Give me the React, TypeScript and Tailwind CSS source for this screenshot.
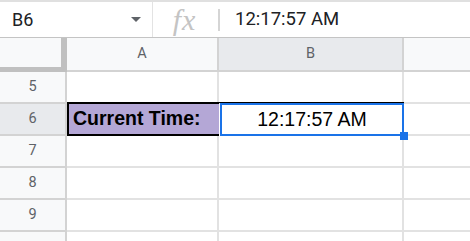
import React from "react";

const rowNums = [5, 6, 7, 8, 9, 10];

export default function App() {
  return (
    <div className="w-[470px] h-[241px] overflow-hidden bg-white" style={{ fontFamily: "Roboto, 'Liberation Sans', sans-serif" }}>
      {/* top strip */}
      <div className="h-[2px] bg-[#e0e0e0]" />
      {/* formula bar */}
      <div className="h-[36px] flex items-stretch border-b border-[#c4c4c4]">
        <div className="w-[153px] flex items-center justify-between pl-[12px] pr-[11px] border-r border-[#e3e3e3]">
          <span className="text-[18px] text-[#202124] leading-none">B6</span>
          <svg width="10" height="5" viewBox="0 0 10 5"><path d="M0 0 L10 0 L5 5 Z" fill="#5f6368" /></svg>
        </div>
        <div className="w-[65px] flex items-center justify-center">
          <span className="text-[30px] text-[#c4c4c4] italic leading-none pr-[2px] tracking-[1px]" style={{ fontFamily: "'Liberation Serif', serif" }}>fx</span>
        </div>
        <div className="flex items-center">
          <div className="w-[2px] h-[22px] bg-[#d5d5d5]" />
        </div>
        <div className="flex items-center pl-[15px]">
          <span className="text-[18.5px] text-[#202124] leading-none">12:17:57 AM</span>
        </div>
      </div>
      {/* column header */}
      <div className="h-[34px] flex">
        <div className="w-[67px] bg-[#f8f9fa] border-r-[6px] border-b-[5px] border-[#c0c0c0]" />
        <div className="w-[152px] bg-[#f8f9fa] border-r-2 border-b-2 border-[#d3d3d3] flex items-center justify-center text-[14.5px] text-[#5f6368]">A</div>
        <div className="w-[185px] bg-[#e8eaed] border-r-2 border-b-2 border-[#d3d3d3] flex items-center justify-center text-[14.5px] text-[#5f6368]">B</div>
        <div className="flex-1 bg-[#f8f9fa] border-b-2 border-[#d3d3d3]" />
      </div>
      {/* rows */}
      {rowNums.map((n) => (
        <div key={n} className="h-[32px] flex">
          <div className={`w-[67px] border-r-2 border-b-2 border-[#d3d3d3] flex items-center justify-center text-[14.5px] text-[#5f6368] ${n === 6 ? "bg-[#e8eaed]" : "bg-[#f8f9fa]"}`}>{n < 10 ? n : ""}</div>
          {n === 6 ? (
            <>
              <div className="w-[152px] border-l-2 border-t-2 border-b-2 border-black bg-[#b4a7d6] -mt-[2px] h-[34px] flex items-center pl-[4px]">
                <span className="text-[19.5px] font-bold text-black leading-none" style={{ fontFamily: "Arial, 'Liberation Sans', sans-serif" }}>Current Time:</span>
              </div>
              <div className="relative w-[185px] -mt-[2px] h-[34px] border-t border-black">
                <div className="absolute left-[1px] top-0 right-0 bottom-0 border-2 border-[#1a73e8] flex items-center justify-center">
                  <span className="text-[19.5px] text-black leading-none" style={{ fontFamily: "Arial, 'Liberation Sans', sans-serif" }}>12:17:57 AM</span>
                </div>
                <div className="absolute right-[-4px] bottom-[-4px] w-[8px] h-[8px] bg-[#1a73e8]" />
              </div>
              <div className="flex-1 border-b-2 border-[#e2e2e2]" />
            </>
          ) : (
            <>
              <div className="w-[152px] border-r-2 border-b-2 border-[#e2e2e2]" />
              <div className="w-[185px] border-r-2 border-b-2 border-[#e2e2e2]" />
              <div className="flex-1 border-b-2 border-[#e2e2e2]" />
            </>
          )}
        </div>
      ))}
    </div>
  );
}
